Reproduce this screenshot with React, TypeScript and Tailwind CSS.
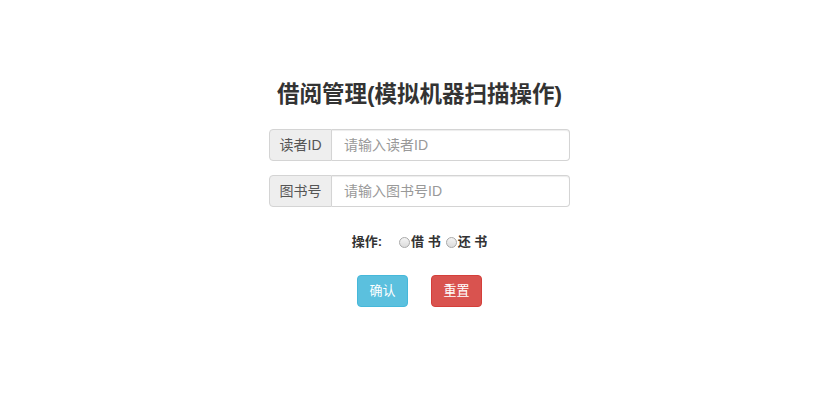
import React, { useState } from 'react';

const font = { fontFamily: '"Liberation Sans", "Noto Sans CJK SC", sans-serif' };

const Radio: React.FC<{ checked: boolean; onClick: () => void }> = ({ checked, onClick }) => (
  <span
    onClick={onClick}
    className="inline-flex items-center justify-center w-[11px] h-[11px] rounded-full border border-[#a9a9a9] bg-gradient-to-b from-[#f4f4f4] to-[#dcdcdc] cursor-pointer"
  >
    {checked && <span className="w-[5px] h-[5px] rounded-full bg-[#333]" />}
  </span>
);

const App: React.FC = () => {
  const [readerId, setReaderId] = useState<string>('');
  const [bookId, setBookId] = useState<string>('');
  const [op, setOp] = useState<string>('');

  const handleReset = () => {
    setReaderId('');
    setBookId('');
    setOp('');
  };

  return (
    <div className="w-full h-[410px] bg-white flex flex-col items-center pt-[81px] text-[#333]" style={font}>
      <h2 className="text-[22.5px] leading-[27px] font-bold text-[#333] mb-[21px]">借阅管理(模拟机器扫描操作)</h2>

      <div className="flex w-[301px] h-[32px] mb-[14px]">
        <span className="flex items-center justify-center w-[63px] bg-[#eee] border border-[#d4d4d4] rounded-l-[4px] text-[14px] text-[#555]">读者ID</span>
        <input
          value={readerId}
          onChange={(e) => setReaderId(e.target.value)}
          placeholder="请输入读者ID"
          className="flex-1 min-w-0 border border-l-0 border-[#d4d4d4] rounded-r-[4px] px-[12px] text-[14px] text-[#555] placeholder:text-[#999] outline-none shadow-[inset_0_1px_1px_rgba(0,0,0,0.075)]"
        />
      </div>

      <div className="flex w-[301px] h-[32px] mb-[25px]">
        <span className="flex items-center justify-center w-[63px] bg-[#eee] border border-[#d4d4d4] rounded-l-[4px] text-[14px] text-[#555]">图书号</span>
        <input
          value={bookId}
          onChange={(e) => setBookId(e.target.value)}
          placeholder="请输入图书号ID"
          className="flex-1 min-w-0 border border-l-0 border-[#d4d4d4] rounded-r-[4px] px-[12px] text-[14px] text-[#555] placeholder:text-[#999] outline-none shadow-[inset_0_1px_1px_rgba(0,0,0,0.075)]"
        />
      </div>

      <div className="flex items-center h-[20px] text-[13px] font-bold text-[#333] mb-[23px]">
        <span className="mr-[17px]">操作:</span>
        <Radio checked={op === 'borrow'} onClick={() => setOp('borrow')} />
        <span className="ml-[1px] mr-[5px]">借 书</span>
        <Radio checked={op === 'return'} onClick={() => setOp('return')} />
        <span className="ml-[1px]">还 书</span>
      </div>

      <div className="flex gap-[23px]">
        <button className="w-[51px] h-[32px] rounded-[4px] bg-[#5bc0de] border border-[#46b8da] text-white text-[13px]">确认</button>
        <button onClick={handleReset} className="w-[51px] h-[32px] rounded-[4px] bg-[#d9534f] border border-[#d43f3a] text-white text-[13px]">重置</button>
      </div>
    </div>
  );
};

export default App;
